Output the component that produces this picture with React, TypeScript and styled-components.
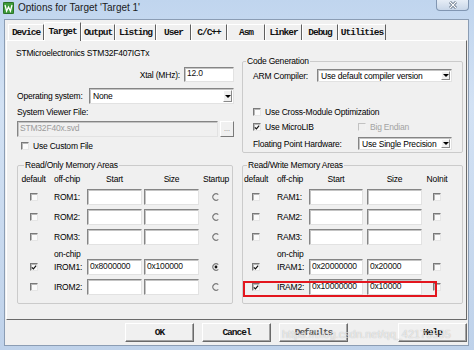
import React from "react";
import styled, { createGlobalStyle } from "styled-components";

const ui = `"Liberation Sans", Arial, sans-serif`;
const mono = `"Liberation Mono", "Courier New", monospace`;

const GlobalStyle = createGlobalStyle`
  html, body {
    margin: 0;
    padding: 0;
  }
  body {
    width: 474px;
    height: 350px;
    overflow: hidden;
    background: #c6d8ee;
  }
`;

type MemRow = {
  label: string;
  start?: string;
  size?: string;
  def?: boolean;
  on?: boolean;
};

const romRows: MemRow[] = [
  { label: "ROM1:" },
  { label: "ROM2:" },
  { label: "ROM3:" },
];
const iromRows: MemRow[] = [
  { label: "IROM1:", start: "0x8000000", size: "0x100000", def: true, on: true },
  { label: "IROM2:" },
];
const ramRows: MemRow[] = [
  { label: "RAM1:" },
  { label: "RAM2:" },
  { label: "RAM3:" },
];
const iramRows: MemRow[] = [
  { label: "IRAM1:", start: "0x20000000", size: "0x20000", def: true },
  { label: "IRAM2:", start: "0x10000000", size: "0x10000", def: true },
];

const tabs = [
  { name: "Device", w: 36 },
  { name: "Target", w: 37 },
  { name: "Output", w: 34 },
  { name: "Listing", w: 41 },
  { name: "User", w: 35 },
  { name: "C/C++", w: 36 },
  { name: "Asm", w: 38 },
  { name: "Linker", w: 37 },
  { name: "Debug", w: 36 },
  { name: "Utilities", w: 48 },
];

const Check = ({ checked, disabled }: { checked?: boolean; disabled?: boolean }) => (
  <Box $disabled={disabled}>
    {checked && (
      <svg width="7" height="7" viewBox="0 0 7 7">
        <path d="M1 3.3 L2.8 5.2 L6 1.2" stroke="#111" strokeWidth="1.4" fill="none" />
      </svg>
    )}
  </Box>
);

const Radio = ({ on }: { on?: boolean }) => (
  <svg width="8" height="8" viewBox="0 0 8 8">
    <path d="M6.3 1.7 A3.2 3.2 0 1 0 6.3 6.3" stroke="#7a7a7a" strokeWidth="1.1" fill="none" />
    {on && <circle cx="4" cy="4" r="1.4" fill="#111" />}
  </svg>
);

const Dropdown = ({ w, h, value }: { w: number; h: number; value: string }) => (
  <Select $w={w} $h={h}>
    <span>{value}</span>
    <DropBtn>
      <Arrow />
    </DropBtn>
  </Select>
);

const MemGroup = ({
  title,
  offset,
  cols,
  gap,
  pad,
  lastHead,
  top,
  bottom,
  radio,
}: {
  title: string;
  offset: number;
  cols: string;
  gap: number;
  pad: number;
  lastHead: string;
  top: MemRow[];
  bottom: MemRow[];
  radio?: boolean;
}) => {
  const row = (r: MemRow) => (
    <React.Fragment key={r.label}>
      <Cell $justify="center">
        <Check checked={r.def} />
      </Cell>
      <Cell $pad={pad}>{r.label}</Cell>
      <Field $w={cols === "" ? 0 : 0} $fill>{r.start}</Field>
      <Field $w={0} $fill>{r.size}</Field>
      <Cell $justify="center">{radio ? <Radio on={r.on} /> : <Check />}</Cell>
    </React.Fragment>
  );
  return (
    <Group>
      <Legend $offset={offset}>{title}</Legend>
      <MemGrid $cols={cols} $gap={gap}>
        <Head $align="center">default</Head>
        <Head $align="left" $pad={pad}>
          off-chip
        </Head>
        <Head $align="center">Start</Head>
        <Head $align="center">Size</Head>
        <Head $align="center">{lastHead}</Head>
        {top.map(row)}
        <span />
        <OnChip $pad={pad}>on-chip</OnChip>
        {bottom.map(row)}
      </MemGrid>
    </Group>
  );
};

export default function App() {
  return (
    <Window>
      <GlobalStyle />
      <TitleBar>
        <svg width="11" height="12" viewBox="0 0 11 12" style={{ marginTop: 2, flex: "none" }}>
          <rect x="0" y="0" width="11" height="12" rx="1" fill="#3f9b3a" />
          <rect x="0.5" y="0.5" width="10" height="11" rx="1" fill="none" stroke="#2a6e28" />
          <path d="M2 3 L3.6 9 L5.5 5 L7.4 9 L9 3" stroke="#fff" strokeWidth="1.3" fill="none" />
        </svg>
        <Title>Options for Target 'Target 1'</Title>
        <CloseBtn>
          <svg width="10" height="8" viewBox="0 0 10 8">
            <path d="M2 1 L8 7 M8 1 L2 7" stroke="#4d5d73" strokeWidth="2.6" />
            <path d="M2 1 L8 7 M8 1 L2 7" stroke="#fff" strokeWidth="1.2" />
          </svg>
        </CloseBtn>
      </TitleBar>

      <Client>
        <TabStrip>
          {tabs.map((t) => (
            <Tab key={t.name} $w={t.w} $active={t.name === "Target"}>
              {t.name}
            </Tab>
          ))}
        </TabStrip>

        <Panel>
          <TopGrid>
            <Column>
              <Vendor>STMicroelectronics STM32F407IGTx</Vendor>
              <FormRow $mt={8} $h={15} $justify="flex-end">
                <span>Xtal (MHz):</span>
                <Field $w={50} $h={15}>
                  12.0
                </Field>
              </FormRow>
              <FormRow $mt={6} $h={16} $justify="space-between">
                <Label $pad={1}>Operating system:</Label>
                <Dropdown w={145} h={16} value="None" />
              </FormRow>
              <Label $pad={1} $mt={3}>
                System Viewer File:
              </Label>
              <FormRow $mt={4} $h={16} $justify="flex-start">
                <Field $w={201} $h={16} $disabled style={{ marginLeft: 1 }}>
                  STM32F40x.svd
                </Field>
                <SmallButton>...</SmallButton>
              </FormRow>
              <CheckLine $mt={4} $pad={5}>
                <Check />
                <span>Use Custom File</span>
              </CheckLine>
            </Column>

            <Group $mt={9}>
              <Legend $offset={3}>Code Generation</Legend>
              <CodeBody>
                <FormRow $mt={0} $h={13} $justify="space-between">
                  <span>ARM Compiler:</span>
                  <Dropdown w={135} h={13} value="Use default compiler version" />
                </FormRow>
                <CheckLine $mt={25}>
                  <Check />
                  <span>Use Cross-Module Optimization</span>
                </CheckLine>
                <OptionPair>
                  <CheckLine>
                    <Check checked />
                    <span>Use MicroLIB</span>
                  </CheckLine>
                  <CheckLine $disabled>
                    <Check disabled />
                    <span>Big Endian</span>
                  </CheckLine>
                </OptionPair>
                <FormRow $mt={5} $h={13} $justify="space-between">
                  <span>Floating Point Hardware:</span>
                  <Dropdown w={94} h={13} value="Use Single Precision" />
                </FormRow>
              </CodeBody>
            </Group>
          </TopGrid>

          <MemSection>
            <MemGroup
              title="Read/Only Memory Areas"
              offset={6}
              cols="31px 34px 55px 55px 30px"
              gap={2}
              pad={3}
              lastHead="Startup"
              top={romRows}
              bottom={iromRows}
              radio
            />
            <MemGroup
              title="Read/Write Memory Areas"
              offset={4}
              cols="26px 32px 54px 55px 22px"
              gap={4}
              pad={4}
              lastHead="NoInit"
              top={ramRows}
              bottom={iramRows}
            />
          </MemSection>
        </Panel>

        <ButtonBar>
          <DlgButton $gap={0}>OK</DlgButton>
          <DlgButton $gap={8}>Cancel</DlgButton>
          <DlgButton $gap={8} $dim>
            Defaults
          </DlgButton>
          <DlgButton $gap={50}>Help</DlgButton>
        </ButtonBar>
      </Client>

      <Highlight />
      <Watermark>https://blog.csdn.net/qq_42173535</Watermark>
    </Window>
  );
}

const Window = styled.div`
  position: relative;
  width: 474px;
  height: 350px;
  display: flex;
  flex-direction: column;
  overflow: hidden;
  background: linear-gradient(180deg, #c0d5ee 0%, #d3e2f4 30%, #bfd2ea 100%);
  font-family: ${ui};
  font-size: 8.5px;
  letter-spacing: -0.2px;
  color: #000;
`;

const TitleBar = styled.div`
  height: 19px;
  flex: none;
  display: flex;
  align-items: flex-start;
  padding-left: 3px;
`;

const Title = styled.div`
  margin: 2px 0 0 4px;
  font-size: 10px;
  line-height: 11px;
  letter-spacing: 0;
  color: #1b1b1b;
`;

const CloseBtn = styled.div`
  margin-left: auto;
  margin-right: 5px;
  width: 33px;
  height: 11px;
  box-sizing: border-box;
  border: 1px solid #8196b2;
  border-top: none;
  border-radius: 0 0 4px 4px;
  background: linear-gradient(#e6edf6, #c8d6e8);
  display: flex;
  align-items: center;
  justify-content: center;
`;

const Client = styled.div`
  flex: 1;
  margin: 0 5px 4px 4px;
  display: flex;
  flex-direction: column;
  background: #f0f0f0;
  border: 1px solid #8b9db4;
`;

const TabStrip = styled.div`
  height: 20px;
  flex: none;
  display: flex;
  align-items: flex-end;
  padding-left: 3px;
`;

const Tab = styled.div<{ $w: number; $active?: boolean }>`
  width: ${(p) => p.$w}px;
  height: ${(p) => (p.$active ? 19 : 16)}px;
  box-sizing: border-box;
  padding-top: ${(p) => (p.$active ? 4 : 3)}px;
  border-top: 1px solid #fff;
  border-left: 1px solid #fff;
  border-right: 1px solid #5f5f5f;
  background: ${(p) => (p.$active ? "#f4f4f4" : "#f0f0f0")};
  margin-bottom: ${(p) => (p.$active ? -1 : 0)}px;
  position: relative;
  z-index: ${(p) => (p.$active ? 1 : 0)};
  font-family: ${mono};
  font-weight: bold;
  font-size: 9.5px;
  line-height: 10px;
  letter-spacing: -1px;
  text-align: center;
  color: #111;
`;

const Panel = styled.div`
  margin: 0 1px;
  height: 280px;
  flex: none;
  box-sizing: border-box;
  border: 1px solid;
  border-color: #fff #6a6a6a #6a6a6a #fff;
  padding: 6px 3px 0 9px;
`;

const TopGrid = styled.div`
  display: grid;
  grid-template-columns: 218px 221px;
  column-gap: 8px;
  align-items: start;
`;

const Column = styled.div`
  display: flex;
  flex-direction: column;
`;

const Vendor = styled.div`
  line-height: 12px;
  height: 12px;
`;

const FormRow = styled.div<{ $mt: number; $h: number; $justify: string }>`
  margin-top: ${(p) => p.$mt}px;
  height: ${(p) => p.$h}px;
  display: flex;
  align-items: center;
  justify-content: ${(p) => p.$justify};
  gap: 4px;
  white-space: nowrap;
`;

const Label = styled.div<{ $pad?: number; $mt?: number }>`
  padding-left: ${(p) => p.$pad ?? 0}px;
  margin-top: ${(p) => p.$mt ?? 0}px;
  line-height: 10px;
  white-space: nowrap;
`;

const Field = styled.div<{ $w: number; $h?: number; $disabled?: boolean; $fill?: boolean }>`
  width: ${(p) => (p.$fill ? "100%" : `${p.$w}px`)};
  height: ${(p) => p.$h ?? 16}px;
  box-sizing: border-box;
  flex: none;
  padding: 0 2px;
  border: 1px solid;
  border-color: #858585 #e2e2e2 #e2e2e2 #858585;
  box-shadow: inset 1px 1px 0 #c4c4c4;
  background: ${(p) => (p.$disabled ? "#f0f0f0" : "#fff")};
  color: ${(p) => (p.$disabled ? "#9b9b9b" : "#111")};
  line-height: ${(p) => (p.$h ?? 16) - 4}px;
  white-space: nowrap;
  overflow: hidden;
`;

const SmallButton = styled.div`
  width: 14px;
  height: 16px;
  box-sizing: border-box;
  margin-left: -2px;
  border: 1px solid;
  border-color: #fff #7a7a7a #7a7a7a #fff;
  background: #f0f0f0;
  color: #777;
  font-size: 7px;
  line-height: 14px;
  text-align: center;
  letter-spacing: 0;
`;

const Select = styled.div<{ $w: number; $h: number }>`
  width: ${(p) => p.$w}px;
  height: ${(p) => p.$h}px;
  box-sizing: border-box;
  flex: none;
  display: flex;
  align-items: center;
  justify-content: space-between;
  padding: 0 1px 0 3px;
  border: 1px solid;
  border-color: #858585 #e2e2e2 #e2e2e2 #858585;
  box-shadow: inset 1px 1px 0 #c4c4c4;
  background: #fff;
  white-space: nowrap;
`;

const DropBtn = styled.span`
  width: 9px;
  height: calc(100% - 2px);
  box-sizing: border-box;
  display: flex;
  align-items: center;
  justify-content: center;
  border: 1px solid;
  border-color: #fff #8a8a8a #8a8a8a #fff;
  background: #f0f0f0;
`;

const Arrow = styled.span`
  width: 0;
  height: 0;
  border-left: 3px solid transparent;
  border-right: 3px solid transparent;
  border-top: 3px solid #000;
`;

const CheckLine = styled.div<{ $mt?: number; $pad?: number; $disabled?: boolean }>`
  margin-top: ${(p) => p.$mt ?? 0}px;
  padding-left: ${(p) => p.$pad ?? 0}px;
  height: 10px;
  display: flex;
  align-items: center;
  gap: 4px;
  white-space: nowrap;
  color: ${(p) => (p.$disabled ? "#a3a3a3" : "#000")};
`;

const Box = styled.span<{ $disabled?: boolean }>`
  width: 8px;
  height: 8px;
  box-sizing: border-box;
  flex: none;
  display: flex;
  align-items: center;
  justify-content: center;
  border: 1px solid;
  border-color: ${(p) =>
    p.$disabled ? "#c2c2c2 #f2f2f2 #f2f2f2 #c2c2c2" : "#7a7a7a #e6e6e6 #e6e6e6 #7a7a7a"};
  box-shadow: ${(p) => (p.$disabled ? "none" : "inset 1px 1px 0 #b8b8b8")};
  background: ${(p) => (p.$disabled ? "#f0f0f0" : "#fbfbfb")};
`;

const Group = styled.fieldset<{ $mt?: number }>`
  margin: ${(p) => p.$mt ?? 0}px 0 0 0;
  padding: 0;
  min-width: 0;
  border: 1px solid #cbcbcb;
  border-radius: 2px;
`;

const Legend = styled.legend<{ $offset: number }>`
  margin-left: ${(p) => p.$offset}px;
  padding: 0 1px;
  font-size: 8.5px;
  line-height: 10px;
`;

const CodeBody = styled.div`
  display: flex;
  flex-direction: column;
  padding: 3px 10px 2px 10px;
`;

const OptionPair = styled.div`
  margin-top: 5px;
  display: grid;
  grid-template-columns: 105px auto;
`;

const MemSection = styled.div`
  margin-top: 7px;
  padding-left: 1px;
  display: grid;
  grid-template-columns: 216px 221px;
  column-gap: 9px;
`;

const MemGrid = styled.div<{ $cols: string; $gap: number }>`
  display: grid;
  grid-template-columns: ${(p) => p.$cols};
  grid-template-rows: 16px repeat(3, 20px) 10px repeat(2, 20px);
  column-gap: ${(p) => p.$gap}px;
  align-items: start;
  padding: 3px 0 4px 0;
`;

const Head = styled.div<{ $align: string; $pad?: number }>`
  padding: 1px 0 0 ${(p) => p.$pad ?? 0}px;
  line-height: 10px;
  text-align: ${(p) => p.$align};
  white-space: nowrap;
`;

const Cell = styled.div<{ $justify?: string; $pad?: number }>`
  height: 16px;
  display: flex;
  align-items: center;
  justify-content: ${(p) => p.$justify ?? "flex-start"};
  padding-left: ${(p) => p.$pad ?? 0}px;
  white-space: nowrap;
`;

const OnChip = styled.div<{ $pad: number }>`
  grid-column: 2 / -1;
  padding-left: ${(p) => p.$pad}px;
  line-height: 10px;
`;

const ButtonBar = styled.div`
  flex: 1;
  display: flex;
  justify-content: flex-end;
  align-items: flex-start;
  padding: 3px 1px 0 0;
`;

const DlgButton = styled.div<{ $gap: number; $dim?: boolean }>`
  width: 69px;
  height: 19px;
  box-sizing: border-box;
  margin-left: ${(p) => p.$gap}px;
  display: flex;
  align-items: center;
  justify-content: center;
  border: 1px solid;
  border-color: #fff #6a6a6a #6a6a6a #fff;
  box-shadow: inset -1px -1px 0 #a3a3a3;
  background: #f0f0f0;
  font-family: ${mono};
  font-weight: bold;
  font-size: 9.5px;
  letter-spacing: -1px;
  color: ${(p) => (p.$dim ? "#555" : "#111")};
`;

const Highlight = styled.div`
  position: absolute;
  left: 243px;
  top: 281px;
  width: 194px;
  height: 16px;
  box-sizing: border-box;
  border: 2px solid #e3161e;
  pointer-events: none;
`;

const Watermark = styled.div`
  position: absolute;
  left: 282px;
  top: 328px;
  font-size: 11px;
  letter-spacing: 0;
  color: rgba(255, 255, 255, 0.7);
  text-shadow: 0 0 1px rgba(0, 0, 0, 0.3);
  pointer-events: none;
`;
